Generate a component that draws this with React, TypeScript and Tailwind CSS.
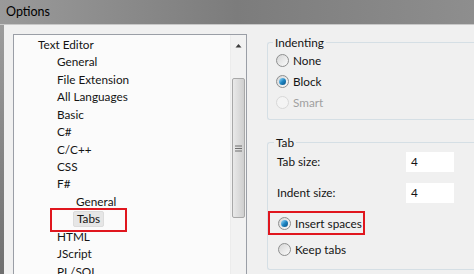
import React from 'react'

const font = { fontFamily: 'Lato, "Open Sans", sans-serif' }

function Radio({ checked, disabled }: { checked?: boolean; disabled?: boolean }) {
  return (
    <span
      className={`relative inline-flex w-[13px] h-[13px] rounded-full border items-center justify-center shrink-0 ${
        disabled
          ? 'border-[#d8d8d8] bg-[#f4f4f4]'
          : 'border-[#8e8f8f] bg-gradient-to-br from-[#d6d6d6] to-[#fbfbfb]'
      }`}
    >
      {checked && (
        <span className="w-[7px] h-[7px] rounded-full bg-gradient-to-br from-[#9be3ff] via-[#1e87c4] to-[#0c4f83]" />
      )}
    </span>
  )
}

const tree: { label: string; level: number; selected?: boolean }[] = [
  { label: 'Text Editor', level: 0 },
  { label: 'General', level: 1 },
  { label: 'File Extension', level: 1 },
  { label: 'All Languages', level: 1 },
  { label: 'Basic', level: 1 },
  { label: 'C#', level: 1 },
  { label: 'C/C++', level: 1 },
  { label: 'CSS', level: 1 },
  { label: 'F#', level: 1 },
  { label: 'General', level: 2 },
  { label: 'Tabs', level: 2, selected: true },
  { label: 'HTML', level: 1 },
  { label: 'JScript', level: 1 },
  { label: 'PL/SQL', level: 1 },
]

export default function App() {
  return (
    <div className="w-[474px] h-[274px] overflow-hidden flex flex-col text-[11.75px] text-[#141414]" style={font}>
      {/* title bar */}
      <div className="h-[25px] shrink-0 flex items-center pl-[6px] bg-gradient-to-r from-[#9a9a9a] via-[#7c7c7c] to-[#8e8e8e] border-b border-[#c8c8c8]">
        <span className="text-[12.5px] text-black leading-none">Options</span>
      </div>

      <div className="flex-1 flex min-h-0">
        <div className="w-[4px] shrink-0 bg-gradient-to-b from-[#9c9c9c] to-[#6f6f6f]" />
        <div className="flex-1 flex bg-[#f0f0f0] pl-[9px] pt-[9px] min-w-0">
          {/* tree */}
          <div className="w-[234px] shrink-0 border border-[#9a9ea6] border-b-0 bg-[#fbfbfb] flex">
            <div className="flex-1 pt-[1px]">
              {tree.map((t, i) => (
                <div
                  key={i}
                  className="h-[17.45px] flex items-center relative"
                  style={{ paddingLeft: 24 + t.level * 19 }}
                >
                  {t.selected ? (
                    <>
                      <span className="absolute left-[36px] -top-[2px] w-[77px] h-[24px] border-2 border-[#e0161e]" />
                      <span className="px-[3px] -ml-[3px] bg-[#e6e6e6] border border-[#dcdcdc] rounded-[2px] leading-[14px]">
                        {t.label}
                      </span>
                    </>
                  ) : (
                    <span>{t.label}</span>
                  )}
                </div>
              ))}
            </div>
            {/* scrollbar */}
            <div className="w-[16px] shrink-0 bg-[#f2f2f2] border-l border-[#ececec] flex flex-col items-center pt-[8px]">
              <svg width="7" height="5" viewBox="0 0 7 5" className="mb-[30px]">
                <path d="M0.5 4.5 L3.5 1 L6.5 4.5 Z" fill="#3c3c3c" />
              </svg>
              <div className="w-[13px] h-[140px] rounded-[2px] border border-[#a8a8a8] bg-gradient-to-r from-[#e9e9e9] via-[#dcdcdc] to-[#cfcfcf] flex items-center justify-center">
                <svg width="7" height="7" viewBox="0 0 7 7">
                  <path d="M0 1h7M0 3.5h7M0 6h7" stroke="#6e6e6e" strokeWidth="1" />
                </svg>
              </div>
            </div>
          </div>

          {/* right side */}
          <div className="flex-1 flex flex-col ml-[20px] pt-[8px] min-w-0">
            <div className="relative border border-[#d5dfe5] border-r-0 rounded-l-[3px] h-[78px] pt-[11px] pl-[8px] flex flex-col gap-[8px]">
              <span className="absolute -top-[9px] left-[5px] px-[2px] bg-[#f0f0f0] leading-[17px]">Indenting</span>
              <label className="flex items-center gap-[4px] leading-[13px]">
                <Radio /> <span>None</span>
              </label>
              <label className="flex items-center gap-[4px] leading-[13px]">
                <Radio checked /> <span>Block</span>
              </label>
              <label className="flex items-center gap-[4px] leading-[13px] text-[#a0a0a0]">
                <Radio disabled /> <span>Smart</span>
              </label>
            </div>

            <div className="relative border border-[#d5dfe5] border-r-0 rounded-l-[3px] mt-[22px] h-[128px] pl-[9px] pt-[8px]">
              <span className="absolute -top-[9px] left-[6px] px-[2px] bg-[#f0f0f0] leading-[17px]">Tab</span>
              <div className="flex items-center h-[22px]">
                <span className="w-[128px]">Tab size:</span>
                <span className="w-[50px] h-[22px] bg-white border border-[#f0f0f0] pl-[5px] leading-[20px]">4</span>
              </div>
              <div className="flex items-center h-[22px] mt-[9px]">
                <span className="w-[128px]">Indent size:</span>
                <span className="w-[50px] h-[22px] bg-white border border-[#f0f0f0] pl-[5px] leading-[20px]">4</span>
              </div>
              <div className="relative flex items-center gap-[4px] mt-[9px] h-[20px] leading-[13px] pl-[1px]">
                <span className="absolute -left-[9px] -top-[2px] w-[97px] h-[24px] border-2 border-[#e0161e]" />
                <Radio checked /> <span>Insert spaces</span>
              </div>
              <div className="flex items-center gap-[4px] mt-[6px] h-[20px] leading-[13px] pl-[1px]">
                <Radio /> <span>Keep tabs</span>
              </div>
            </div>
          </div>
        </div>
      </div>
    </div>
  )
}
